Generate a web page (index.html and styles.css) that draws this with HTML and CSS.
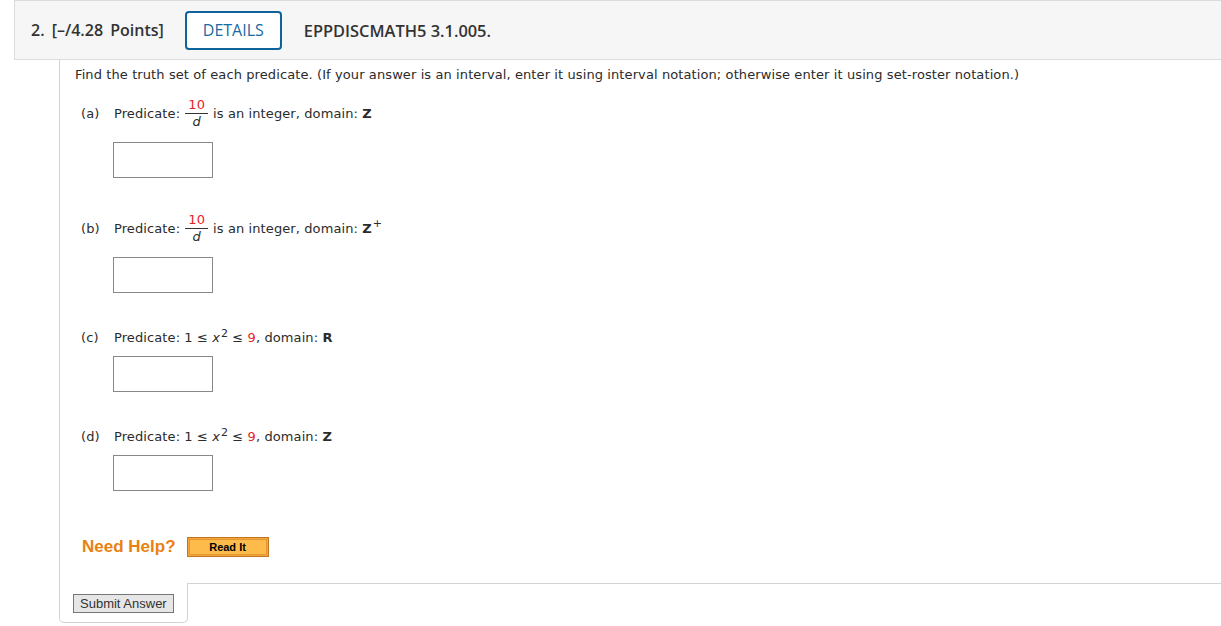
FILE: index.html
```html
<!DOCTYPE html>
<html lang="en">
<head>
<meta charset="utf-8">
<title>EPPDISCMATH5 3.1.005.</title>
<link rel="stylesheet" href="styles.css">
</head>
<body>

    <div class="question-header">
        <span class="points">2. [&ndash;/4.28 Points]</span>
        <button class="details-button">DETAILS</button>
        <span class="question-id">EPPDISCMATH5 3.1.005.</span>
    </div>

    <div class="question-body">
        <p class="prompt">Find the truth set of each predicate. (If your answer is an interval, enter it using interval notation; otherwise enter it using set-roster notation.)</p>

        <div class="part">
            <div class="part-line tall">
                <span class="part-label">(a)</span>
                <span>Predicate: </span>
                <span class="frac"><span class="num">10</span><span class="den">d</span></span>
                <span>is an integer, domain: <b>Z</b></span>
            </div>
            <input class="answer" type="text">
        </div>

        <div class="part">
            <div class="part-line tall">
                <span class="part-label">(b)</span>
                <span>Predicate: </span>
                <span class="frac"><span class="num">10</span><span class="den">d</span></span>
                <span>is an integer, domain: <b>Z</b><sup class="plus">+</sup></span>
            </div>
            <input class="answer" type="text">
        </div>

        <div class="part">
            <div class="part-line">
                <span class="part-label">(c)</span>
                <span>Predicate: 1 &le; <i>x</i><sup>2</sup> &le; <span class="red">9</span>, domain: <b>R</b></span>
            </div>
            <input class="answer" type="text">
        </div>

        <div class="part">
            <div class="part-line">
                <span class="part-label">(d)</span>
                <span>Predicate: 1 &le; <i>x</i><sup>2</sup> &le; <span class="red">9</span>, domain: <b>Z</b></span>
            </div>
            <input class="answer" type="text">
        </div>

        <div class="help">
            <span class="need-help">Need Help?</span>
            <button class="read-it"><span>Read It</span></button>
        </div>
    </div>

    <div class="question-footer">
        <div class="submit-cell">
            <button class="submit-button">Submit Answer</button>
        </div>
        <div class="footer-rest"></div>
    </div>

</body>
</html>
```

FILE: styles.css
```css
body {
    margin: 0;
    padding: 0 0 0 14px;
    background-color: white;
    color: #2b2b2b;
    font-family: "DejaVu Sans", "Bitstream Vera Sans", Verdana, sans-serif;
    font-size: 13px;
    letter-spacing: 0.1px;
    overflow: hidden;
}

.question-header {
    display: flex;
    align-items: center;
    height: 58px;
    background-color: #f6f6f6;
    border: 1px solid #dcdcdc;
    border-right: none;
    padding-left: 16px;
    font-family: "Open Sans", sans-serif;
    font-weight: 600;
    font-size: 16px;
    letter-spacing: 0;
    color: #333;
}

.points {
    word-spacing: 3px;
}

.question-id {
    font-size: 16.4px;
}

.details-button {
    font-family: "Open Sans", sans-serif;
    font-weight: 400;
    font-size: 16px;
    color: #1a6aa0;
    background-color: white;
    border: 2px solid #10629a;
    border-radius: 4px;
    width: 97px;
    height: 39px;
    margin: 0 22px 0 21px;
    padding: 0;
}

.question-body {
    margin-left: 45px;
    border-left: 1px solid #d3d3d3;
    padding: 6px 0 26px 15px;
}

.prompt {
    margin: 0 0 14px 0;
    line-height: 18px;
}

.part {
    padding-left: 6px;
}

.part-line {
    display: flex;
    align-items: center;
    height: 18px;
    white-space: pre;
}

.part-line.tall {
    height: 30px;
    padding-bottom: 4px;
}

.part-label {
    width: 33px;
}

.frac {
    display: inline-flex;
    flex-direction: column;
    align-items: center;
    margin: 0 5px 0 1px;
    line-height: 14px;
}

.frac .num {
    color: #e8231f;
    border-bottom: 1px solid #333;
    padding: 0 3px 1px 3px;
}

.frac .den {
    font-style: italic;
    padding-top: 1px;
}

sup {
    font-size: 11px;
    line-height: 0;
    vertical-align: 5px;
    margin-left: 1px;
}

sup.plus {
    vertical-align: 6px;
}

.red {
    color: #e8231f;
}

.answer {
    display: block;
    box-sizing: border-box;
    width: 100px;
    height: 36px;
    margin: 10px 0 35px 32px;
    border: 1px solid #888;
    padding: 0;
}

.help {
    display: flex;
    align-items: center;
    padding-left: 7px;
    margin-top: 46px;
}

.need-help {
    font-family: "Liberation Sans", Arial, sans-serif;
    font-weight: bold;
    font-size: 17px;
    letter-spacing: 0;
    color: #e8810f;
}

.read-it {
    margin-left: 11px;
    width: 82px;
    height: 20px;
    padding: 1px;
    border: 1px solid #bf7420;
    background-color: #f7a63c;
}

.read-it span {
    display: block;
    height: 100%;
    box-sizing: border-box;
    border: 1px solid #e29530;
    background-color: #fdbb4c;
    font-family: "Liberation Sans", Arial, sans-serif;
    font-weight: bold;
    font-size: 11px;
    line-height: 14px;
    letter-spacing: 0;
    color: black;
}

.question-footer {
    display: flex;
    margin-left: 45px;
}

.submit-cell {
    width: 129px;
    height: 40px;
    border: 1px solid #d3d3d3;
    border-top: none;
    border-radius: 0 0 5px 5px;
    padding-top: 11px;
    padding-left: 13px;
    box-sizing: border-box;
}

.submit-button {
    font-family: "Liberation Sans", Arial, sans-serif;
    font-size: 13px;
    letter-spacing: 0;
    color: #333;
    background-color: #e6e6e6;
    border: 1px solid #777;
    padding: 0 6px;
    height: 19px;
}

.footer-rest {
    flex: 1;
    height: 0;
    border-top: 1px solid #d3d3d3;
    margin-left: -1px;
}
```
